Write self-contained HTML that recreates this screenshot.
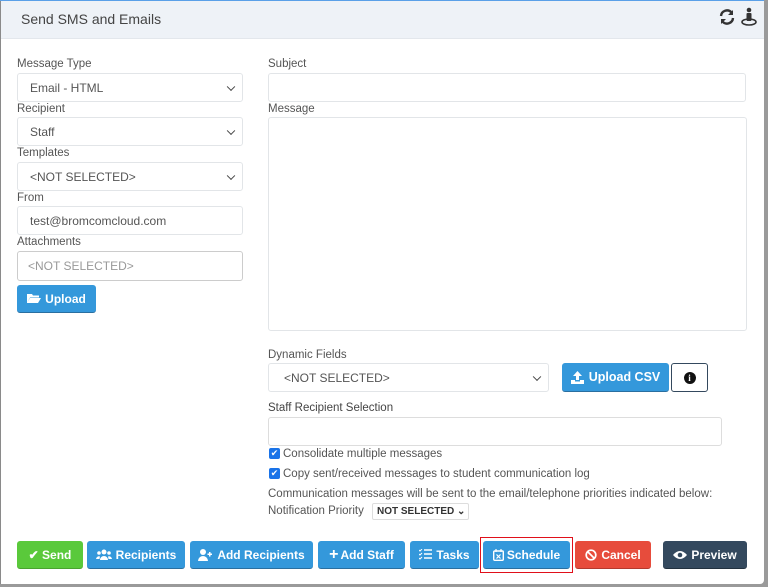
<!DOCTYPE html>
<html><head><style>
*{box-sizing:border-box;margin:0;padding:0}
body{width:768px;height:587px;background:#9a9a9a;position:relative;overflow:hidden;font-family:"Liberation Sans",sans-serif;font-size:12px;color:#555}
.dlg{position:absolute;left:0;top:0;width:764px;height:584px;background:#fff;border-radius:0 0 4px 0}
.edge{position:absolute;left:0;top:0;width:1px;height:584px;background:#8a8a8a}
.topl{position:absolute;left:0;top:0;width:764px;height:1px;background:#5aa0e8}
.hdr{position:absolute;left:1px;top:1px;width:763px;height:38px;background:#eef2f7;border-bottom:1px solid #e3e7ec}
.hdr span{position:absolute;left:20px;top:10px;font-size:14px;color:#444}
.a{position:absolute}
.lbl{position:absolute;font-size:11.5px;color:#555}
.in{position:absolute;border:1px solid #e2e5e8;border-radius:3px;background:#fff;font-size:12px;color:#555;padding-left:12px;display:flex;align-items:center}
.sel::after{content:"";position:absolute;right:8px;top:50%;width:5px;height:5px;border-right:1.5px solid #444;border-bottom:1.5px solid #444;transform:translateY(-70%) rotate(45deg)}
.btn{position:absolute;top:541px;height:28px;border-radius:3px;color:#fff;font-weight:bold;font-size:12px;display:flex;align-items:center;justify-content:center;background:#3498db;border-bottom:1px solid #2a6fa0}
</style></head><body>
<div class="dlg">
<div class="edge"></div><div class="topl"></div>
<div class="hdr"><span>Send SMS and Emails</span>
<svg class="a" style="left:717px;top:7px" width="18" height="18" viewBox="0 0 18 18"><path d="M3 8a6 6 0 0 1 10.5-3.5M15 10a6 6 0 0 1-10.5 3.5" stroke="#333" stroke-width="2.4" fill="none"/><path d="M15 2v5h-5zM3 16v-5h5z" fill="#333"/></svg>
<svg class="a" style="left:739px;top:6px" width="18" height="20" viewBox="0 0 18 20"><circle cx="9" cy="3" r="2.3" fill="#333"/><rect x="6.5" y="6" width="5" height="8" rx="1" fill="#333"/><ellipse cx="9" cy="15" rx="7" ry="3" fill="none" stroke="#333" stroke-width="1.6"/></svg>
</div>

<div class="lbl" style="left:17px;top:58px">Message Type</div>
<div class="in sel" style="left:17px;top:73px;width:226px;height:29px">Email - HTML</div>
<div class="lbl" style="left:17px;top:103px">Recipient</div>
<div class="in sel" style="left:17px;top:117px;width:226px;height:29px">Staff</div>
<div class="lbl" style="left:17px;top:147px">Templates</div>
<div class="in sel" style="left:17px;top:162px;width:226px;height:29px">&lt;NOT SELECTED&gt;</div>
<div class="lbl" style="left:17px;top:192px">From</div>
<div class="in" style="left:17px;top:206px;width:226px;height:29px">test@bromcomcloud.com</div>
<div class="lbl" style="left:17px;top:236px">Attachments</div>
<div class="in" style="left:17px;top:251px;width:226px;height:30px;border-color:#ccc;color:#999;padding-left:10px">&lt;NOT SELECTED&gt;</div>
<div class="btn" style="left:17px;top:285px;width:79px;height:28px">
<svg width="14" height="11" viewBox="0 0 14 11" style="margin-right:4px"><path d="M0 1h5l1 1.5h6v2H3L0 10z M3 5h11l-3 5H0z" fill="#fff"/></svg>Upload</div>

<div class="lbl" style="left:268px;top:58px">Subject</div>
<div class="in" style="left:268px;top:73px;width:478px;height:29px"></div>
<div class="lbl" style="left:268px;top:103px">Message</div>
<div class="in" style="left:268px;top:117px;width:479px;height:214px"></div>
<div class="lbl" style="left:268px;top:349px">Dynamic Fields</div>
<div class="in sel" style="left:268px;top:363px;width:281px;height:29px;padding-left:15px">&lt;NOT SELECTED&gt;</div>
<div class="btn" style="left:562px;top:363px;width:107px;height:29px;font-size:12.5px">
<svg width="13" height="13" viewBox="0 0 13 13" style="margin-right:5px"><path d="M6.5 0L2 5h3v4h3V5h3zM0 9h4v1.5h5V9h4v4H0z" fill="#fff"/></svg>Upload CSV</div>
<div class="a" style="left:671px;top:363px;width:37px;height:29px;border:1px solid #34495e;border-radius:3px;display:flex;align-items:center;justify-content:center"><div style="width:12px;height:12px;border-radius:50%;background:#111;color:#fff;font-size:9px;font-weight:bold;text-align:center;line-height:12px;font-family:'Liberation Serif',serif">i</div></div>
<div class="lbl" style="left:268px;top:402px;color:#444">Staff Recipient Selection</div>
<div class="in" style="left:268px;top:417px;width:454px;height:29px;border-color:#ddd"></div>
<div class="a" style="left:269px;top:448px;width:11px;height:11px;background:#1a73e8;border-radius:2px;color:#fff;font-size:9px;line-height:11px;text-align:center">✔</div>
<div class="lbl" style="left:283px;top:448px">Consolidate multiple messages</div>
<div class="a" style="left:269px;top:468px;width:11px;height:11px;background:#1a73e8;border-radius:2px;color:#fff;font-size:9px;line-height:11px;text-align:center">✔</div>
<div class="lbl" style="left:283px;top:468px">Copy sent/received messages to student communication log</div>
<div class="lbl" style="left:268px;top:488px">Communication messages will be sent to the email/telephone priorities indicated below:</div>
<div class="lbl" style="left:268px;top:505px">Notification Priority</div>
<div class="a" style="left:372px;top:503px;width:97px;height:17px;border:1px solid #ddd;border-radius:2px;font-size:10px;font-weight:bold;color:#333;padding:2px 0 0 4px">NOT SELECTED ⌄</div>

<div class="btn" style="left:17px;width:66px;background:#5ac93b;border-bottom-color:#49a32f">✔&nbsp;Send</div>
<div class="btn" style="left:87px;width:98px">
<svg width="16" height="11" viewBox="0 0 16 11" style="margin-right:4px"><circle cx="8" cy="3" r="2.5" fill="#fff"/><circle cx="3" cy="4" r="1.8" fill="#fff"/><circle cx="13" cy="4" r="1.8" fill="#fff"/><path d="M4 11a4 4 0 0 1 8 0zM0 10a3 3 0 0 1 4-2.5L3.5 10zM16 10a3 3 0 0 0-4-2.5l.5 2.5z" fill="#fff"/></svg>Recipients</div>
<div class="btn" style="left:190px;width:123px">
<svg width="15" height="12" viewBox="0 0 15 12" style="margin-right:4px"><circle cx="5" cy="3" r="3" fill="#fff"/><path d="M0 12a5 5 0 0 1 10 0z M11 3h1.5v1.5H14V6h-1.5v1.5H11V6H9.5V4.5H11z" fill="#fff"/></svg>Add Recipients</div>
<div class="btn" style="left:318px;width:87px"><span style="font-size:16px;margin-right:2px">+</span>Add Staff</div>
<div class="btn" style="left:410px;width:69px">
<svg width="13" height="11" viewBox="0 0 13 11" style="margin-right:4px"><path d="M0 1l1 1 2-2M0 5l1 1 2-2M0 9l1 1 2-2" stroke="#fff" fill="none"/><path d="M5 1h8M5 5h8M5 9h8" stroke="#fff" stroke-width="1.5"/></svg>Tasks</div>
<div class="a" style="left:480px;top:537px;width:93px;height:36px;border:1.5px solid #e0101a"></div>
<div class="btn" style="left:483px;width:87px">
<svg width="11" height="12" viewBox="0 0 11 12" style="margin-right:3px"><rect x="0.7" y="2" width="9.6" height="9.3" rx="1" fill="none" stroke="#fff" stroke-width="1.4"/><path d="M3 0v3M8 0v3M3.5 5.5l4 4M7.5 5.5l-4 4" stroke="#fff" stroke-width="1.2"/></svg>Schedule</div>
<div class="btn" style="left:575px;width:76px;background:#e74c3c;border-bottom-color:#b33a2e">
<svg width="12" height="12" viewBox="0 0 12 12" style="margin-right:4px"><circle cx="6" cy="6" r="4.8" fill="none" stroke="#fff" stroke-width="1.7"/><path d="M2.6 2.6l6.8 6.8" stroke="#fff" stroke-width="1.7"/></svg>Cancel</div>
<div class="btn" style="left:663px;width:84px;background:#34495e;border-bottom-color:#22313f">
<svg width="14" height="10" viewBox="0 0 14 10" style="margin-right:4px"><path d="M0 5Q7-3 14 5Q7 13 0 5z" fill="#fff"/><circle cx="7" cy="5" r="2.3" fill="#34495e"/></svg>Preview</div>
</div>
</body></html>
